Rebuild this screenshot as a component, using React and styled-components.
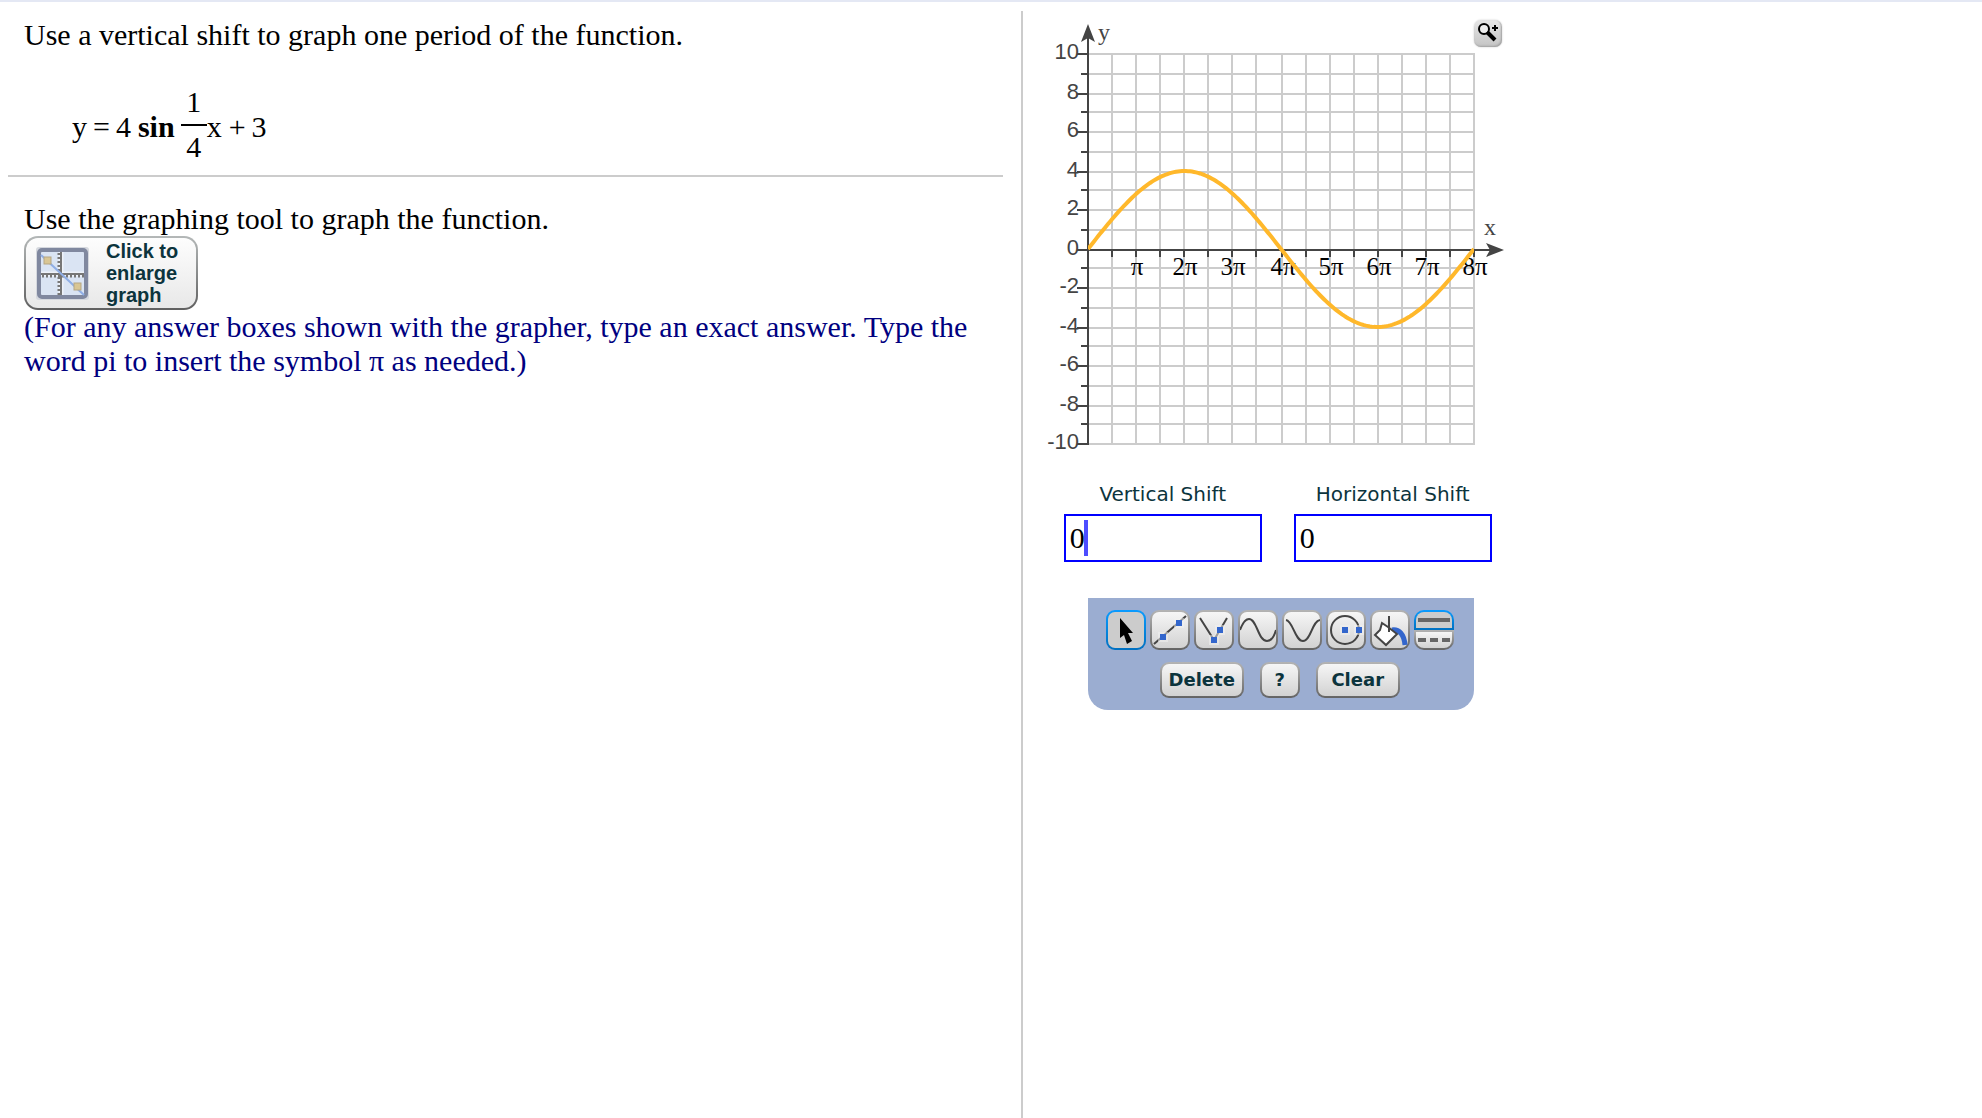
import React, { useState } from "react";
import styled, { createGlobalStyle, css } from "styled-components";

const INK = "#0c343d";
const AXIS = "#444444";
const GRID = "#cccccc";
const CURVE = "#ffb82b";
const BLUE = "#3366cc";

const SERIF = `"Liberation Serif", "Times New Roman", serif`;
const SANS = `"Liberation Sans", Arial, sans-serif`;
const WIDE = `"DejaVu Sans", Verdana, sans-serif`;

const GlobalStyle = createGlobalStyle`
  * { box-sizing: border-box; }
  body {
    margin: 0;
    background: #fff;
    color: #000;
    font-family: ${SERIF};
    font-size: 30px;
    line-height: 34px;
  }
  p { margin: 0; }
  button { font: inherit; color: inherit; padding: 0; cursor: pointer; }
  svg { display: block; }
`;

const Page = styled.div`
  min-height: 100vh;
  display: flex;
  flex-direction: column;
  border-top: 2px solid #e4e8f4;
  padding-top: 9px;
`;

const Panels = styled.main`
  flex: 1;
  display: flex;
`;

const Question = styled.section`
  flex: 0 0 51.5%;
  padding: 7px 18px 0 8px;
`;

const Block = styled.div`
  padding: 0 16px;
`;

const Formula = styled.div`
  display: flex;
  align-items: center;
  margin: 35px 0 9px;
  padding-left: 48px;
  line-height: 30px;
`;

const Term = styled.span`
  margin-left: ${(p) => p.$gap || 0}px;
  font-weight: ${(p) => (p.$bold ? 700 : 400)};
`;

const Fraction = styled.span`
  display: flex;
  flex-direction: column;
  align-items: center;
  width: 26px;
  margin-left: 6px;
  padding-bottom: 4px;
`;

const Numerator = styled.span`
  padding-bottom: 7px;
`;

const Denominator = styled.span`
  align-self: stretch;
  padding-top: 6px;
  border-top: 2px solid #000;
  text-align: center;
`;

const Rule = styled.hr`
  height: 2px;
  margin: 0 0 25px;
  border: 0;
  background: #cccccc;
`;

const Hint = styled.p`
  color: #000080;
`;

const raised = css`
  border: 2px solid transparent;
  background:
    linear-gradient(#f6f6f6, #d2d2d2) padding-box,
    linear-gradient(#b4b4b4, #646464) border-box;
`;

const pressed = css`
  border: 2px solid transparent;
  background:
    linear-gradient(#cccccc, #cccccc) padding-box,
    linear-gradient(#0a9bff, #0070c0) border-box;
`;

const EnlargeButton = styled.button`
  display: flex;
  align-items: center;
  gap: 17px;
  width: 174px;
  height: 74px;
  padding-left: 10px;
  border: 2px solid transparent;
  border-radius: 14px;
  background:
    linear-gradient(#fdfdfd, #e8e8e8) padding-box,
    linear-gradient(#b4b8b8, #606060) border-box;
  color: ${INK};
  font-family: ${SANS};
  font-size: 20px;
  font-weight: 700;
  line-height: 22px;
  text-align: left;
`;

const Grapher = styled.section`
  flex: 1;
  padding-left: 17px;
  border-left: 2px solid #cccccc;
`;

const GraphArea = styled.div`
  position: relative;
  width: 470px;
  padding-top: 3px;
`;

const ZoomButton = styled.button`
  position: absolute;
  top: 9px;
  right: 8px;
  display: grid;
  place-items: center;
  width: 28px;
  height: 27px;
  border: 0;
  border-radius: 7px;
  background: linear-gradient(#e6e6e6, #c4c4c4);
  box-shadow: inset -1px -1px 2px #a0a0a0, 0 0 2px #c8c8c8;
`;

const TickText = styled.text`
  font-family: ${SANS};
  font-size: 22px;
  fill: ${AXIS};
  text-anchor: end;
`;

const PiText = styled.text`
  font-family: ${SERIF};
  font-size: 25px;
  text-anchor: middle;
`;

const AxisName = styled.text`
  font-family: ${SERIF};
  font-size: 24px;
  fill: ${AXIS};
`;

const Fields = styled.div`
  display: flex;
  gap: 32px;
  margin: 28px 0 0 24px;
`;

const Field = styled.div`
  display: flex;
  flex-direction: column;
  align-items: center;
  gap: 8px;
`;

const FieldLabel = styled.label`
  color: ${INK};
  font-family: ${WIDE};
  font-size: 20px;
  line-height: 24px;
`;

const InputWrap = styled.div`
  position: relative;
`;

const Input = styled.input`
  display: block;
  width: 198px;
  height: 48px;
  padding: 0 4px;
  border: 2px solid #0000ff;
  border-radius: 0;
  outline: none;
  background: #fff;
  color: #000;
  font-family: ${SERIF};
  font-size: 30px;
  caret-color: transparent;
`;

const Caret = styled.span`
  position: absolute;
  top: 6px;
  left: 20px;
  width: 4px;
  height: 36px;
  background: #4d4dff;
`;

const Toolbar = styled.div`
  display: flex;
  flex-direction: column;
  align-items: center;
  gap: 12px;
  width: 386px;
  margin: 36px 0 0 48px;
  padding: 12px 20px 12px 18px;
  border-radius: 0 0 20px 20px;
  background: #9badd1;
`;

const Tools = styled.div`
  display: flex;
  gap: 4px;
`;

const Actions = styled.div`
  display: flex;
  gap: 16px;
`;

const ToolButton = styled.button`
  width: 40px;
  height: 40px;
  border-radius: 9px;
  ${(p) => (p.$active ? pressed : raised)}
`;

const LineStyles = styled.div`
  display: flex;
  flex-direction: column;
`;

const LineStyleButton = styled.button`
  display: flex;
  align-items: center;
  justify-content: space-between;
  width: 40px;
  height: 20px;
  ${(p) => (p.$active ? pressed : raised)}
  padding: 0 2px;
  border-radius: ${(p) => (p.$top ? "10px 10px 0 0" : "0 0 10px 10px")};
`;

const Dash = styled.span`
  width: ${(p) => (p.$full ? "100%" : "8px")};
  height: 4px;
  background: #666666;
`;

const ActionButton = styled.button`
  ${raised}
  width: ${(p) => (p.$small ? 40 : 84)}px;
  height: 36px;
  border-radius: 9px;
  color: ${INK};
  font-family: ${WIDE};
  font-size: 18px;
  font-weight: 700;
  line-height: 30px;
`;

/* --- Graph --- */
const X0 = 48;
const Y0 = 236;
const col = (i) => X0 + Math.round(i * 12.0625) * 2;
const row = (i) => 40 + Math.round(i * 9.75) * 2;

const range = (from, to) => Array.from({ length: to - from + 1 }, (_, i) => from + i);

const curvePoints = range(0, 193)
  .map((i) => {
    const x = i * 2;
    return `${X0 + x},${(Y0 - 1 - 78 * Math.sin((2 * Math.PI * x) / 386)).toFixed(2)}`;
  })
  .join(" ");

const Graph = () => (
  <svg width="470" height="440" viewBox="0 0 470 440" role="img" aria-label="Graph of one period of a sine curve">
    <g stroke={GRID} strokeWidth="2">
      {range(1, 16).map((i) => (
        <line key={i} x1={col(i)} y1="39" x2={col(i)} y2="431" />
      ))}
      {range(0, 20).map((i) => (
        <line key={i} x1={X0} y1={row(i)} x2="435" y2={row(i)} />
      ))}
    </g>
    <g stroke={AXIS} strokeWidth="2">
      <line x1={X0} y1="22" x2={X0} y2="431" />
      <line x1={X0} y1={Y0} x2="452" y2={Y0} />
      {range(0, 20).map((i) => (
        <line key={i} x1={i % 2 ? 41 : 37} y1={row(i)} x2={X0} y2={row(i)} />
      ))}
      {range(1, 16).map((i) => (
        <line key={i} x1={col(i)} y1={Y0} x2={col(i)} y2="243" />
      ))}
    </g>
    <path d="M48 10 L55 28 L48 24 L41 28 Z" fill={AXIS} />
    <path d="M464 236 L446 229 L450 236 L446 243 Z" fill={AXIS} />
    {range(0, 10).map((i) => (
      <TickText key={i} x="39" y={row(i * 2) + 5}>
        {10 - i * 2}
      </TickText>
    ))}
    {range(1, 8).map((i) => (
      <PiText key={i} x={col(i * 2) + 1} y="261">
        {i === 1 ? "π" : `${i}π`}
      </PiText>
    ))}
    <AxisName x="58" y="26">y</AxisName>
    <AxisName x="444" y="221">x</AxisName>
    <clipPath id="plot">
      <rect x="48" y="20" width="386" height="420" />
    </clipPath>
    <polyline points={curvePoints} fill="none" stroke={CURVE} strokeWidth="4" clipPath="url(#plot)" />
  </svg>
);

/* --- Icons --- */
const Dot = ({ x, y }) => (
  <g stroke="none">
    <rect x={x - 5} y={y - 5} width="10" height="10" fill="#f2f2f2" opacity="0.5" />
    <rect x={x - 3} y={y - 3} width="6" height="6" fill={BLUE} />
  </g>
);

// Drawn on a 40px box whose outer 2px lie under the button border
const ToolIcon = ({ children }) => (
  <svg width="36" height="36" viewBox="2 2 36 36" fill="none" stroke="#444" strokeWidth="2" aria-hidden="true">
    {children}
  </svg>
);

const GraphIcon = () => (
  <svg width="53" height="53" viewBox="0 0 53 53" fill="none" aria-hidden="true">
    <rect x="0" y="0" width="53" height="53" rx="3" fill="#d5d8de" />
    <rect x="3" y="3" width="47" height="47" rx="3" fill="#dae4f3" stroke="#80889f" strokeWidth="4" />
    <path d="M25 5V48M5 27H48" stroke="#eef2f9" strokeWidth="5" />
    <path d="M25 5V48M5 27H48" stroke="#777777" strokeWidth="2" />
    <path d="M23 6V48" stroke="#777777" strokeWidth="3" strokeDasharray="2 2" />
    <path d="M6 29H48" stroke="#777777" strokeWidth="3" strokeDasharray="2 2" />
    <path d="M5 8L48 48" stroke="#8faee6" strokeWidth="2" />
    <rect x="8" y="10" width="7" height="7" fill="#d9c694" stroke="#b5a683" />
    <rect x="38" y="36" width="7" height="7" fill="#d9c694" stroke="#b5a683" />
  </svg>
);

const MagnifierIcon = () => (
  <svg width="28" height="27" viewBox="0 0 28 27" fill="none" stroke="#000" aria-hidden="true">
    <circle cx="10" cy="9" r="5" fill="#eee" strokeWidth="2" />
    <path d="M13 12L21 20" strokeWidth="4" />
    <path d="M21 5V11M18 8H24" strokeWidth="2" />
  </svg>
);

const TOOLS = [
  {
    name: "Select",
    icon: <path d="M14 8L27 23H22L26 31L21 34L18 25L14 28Z" fill="#000" stroke="none" />,
  },
  {
    name: "Line",
    icon: (
      <>
        <path d="M4 34L36 6" />
        <Dot x={13} y={27} />
        <Dot x={29} y={13} />
      </>
    ),
  },
  {
    name: "Absolute value",
    icon: (
      <>
        <path d="M6 8L20 30L33 8" />
        <Dot x={20} y={30} />
        <Dot x={26} y={20} />
      </>
    ),
  },
  { name: "Sine", icon: <path d="M2 20C5 12 8 9 11 9C19 9 20 31 29 31C33 31 36 27 38 20" /> },
  { name: "Cosine", icon: <path d="M4 10C11 11 13 31 21 31C29 31 30 11 38 10" /> },
  {
    name: "Circle",
    icon: (
      <>
        <circle cx="19" cy="20" r="14" />
        <Dot x={19} y={20} />
        <Dot x={33} y={20} />
      </>
    ),
  },
  {
    name: "Fill",
    icon: (
      <>
        <path d="M22 20C29 19 34 24 35 35" stroke={BLUE} strokeWidth="5" />
        <path d="M12 13L10 20L5 25L16 35L27 24L18 17Z" fill="#fff" />
        <path d="M19 6V22" />
      </>
    ),
  },
];

const App = () => {
  const [tool, setTool] = useState("Select");
  const [lineStyle, setLineStyle] = useState("solid");
  const [focused, setFocused] = useState("vertical");
  const [shift, setShift] = useState({ vertical: "0", horizontal: "0" });

  return (
    <Page>
      <GlobalStyle />
      <Panels>
        <Question>
          <Block>
            <p>Use a vertical shift to graph one period of the function.</p>
            <Formula>
              <Term>y</Term>
              <Term $gap={6}>=</Term>
              <Term $gap={6}>4</Term>
              <Term $gap={7} $bold>sin</Term>
              <Fraction>
                <Numerator>1</Numerator>
                <Denominator>4</Denominator>
              </Fraction>
              <Term>x</Term>
              <Term $gap={7}>+</Term>
              <Term $gap={6}>3</Term>
            </Formula>
          </Block>
          <Rule />
          <Block>
            <p>Use the graphing tool to graph the function.</p>
            <EnlargeButton type="button">
              <GraphIcon />
              <span>
                Click to
                <br />
                enlarge
                <br />
                graph
              </span>
            </EnlargeButton>
            <Hint>
              (For any answer boxes shown with the grapher, type an exact answer. Type the word pi to insert the
              symbol π as needed.)
            </Hint>
          </Block>
        </Question>

        <Grapher>
          <GraphArea>
            <Graph />
            <ZoomButton type="button" aria-label="Zoom in">
              <MagnifierIcon />
            </ZoomButton>
          </GraphArea>

          <Fields>
            {["vertical", "horizontal"].map((key) => (
              <Field key={key}>
                <FieldLabel htmlFor={key}>{key === "vertical" ? "Vertical Shift" : "Horizontal Shift"}</FieldLabel>
                <InputWrap>
                  <Input
                    id={key}
                    type="text"
                    value={shift[key]}
                    onFocus={() => setFocused(key)}
                    onChange={(e) => setShift({ ...shift, [key]: e.target.value })}
                  />
                  {focused === key && <Caret />}
                </InputWrap>
              </Field>
            ))}
          </Fields>

          <Toolbar role="toolbar" aria-label="Graphing tools">
            <Tools>
              {TOOLS.map(({ name, icon }) => (
                <ToolButton
                  key={name}
                  type="button"
                  aria-label={name}
                  aria-pressed={tool === name}
                  $active={tool === name}
                  onClick={() => setTool(name)}
                >
                  <ToolIcon>{icon}</ToolIcon>
                </ToolButton>
              ))}
              <LineStyles>
                <LineStyleButton
                  type="button"
                  aria-label="Solid line"
                  $top
                  $active={lineStyle === "solid"}
                  onClick={() => setLineStyle("solid")}
                >
                  <Dash $full />
                </LineStyleButton>
                <LineStyleButton
                  type="button"
                  aria-label="Dashed line"
                  $active={lineStyle === "dashed"}
                  onClick={() => setLineStyle("dashed")}
                >
                  <Dash />
                  <Dash />
                  <Dash />
                </LineStyleButton>
              </LineStyles>
            </Tools>
            <Actions>
              <ActionButton type="button">Delete</ActionButton>
              <ActionButton type="button" $small aria-label="Help">?</ActionButton>
              <ActionButton type="button" onClick={() => setShift({ vertical: "0", horizontal: "0" })}>
                Clear
              </ActionButton>
            </Actions>
          </Toolbar>
        </Grapher>
      </Panels>
    </Page>
  );
};

export default App;
